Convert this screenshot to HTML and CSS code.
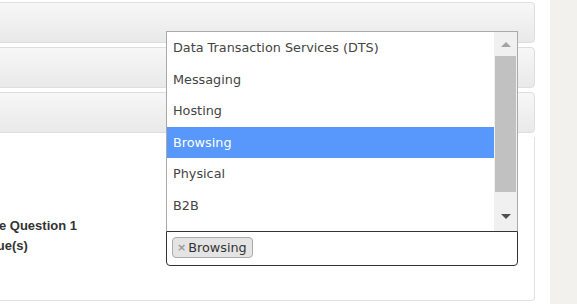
FILE: index.html
```html
<!DOCTYPE html>
<html lang="en">
  <head>
    <meta charset="UTF-8" />
    <title>Question</title>
    <link rel="stylesheet" href="styles.css">
  </head>
  <body>
    <div id="page">
      <div id="main">
        <div class="bar"></div>
        <div class="bar"></div>
        <div class="bar"></div>
        <div class="panel">
          <div class="label">Rate Question 1<br>Value(s)</div>
          <div class="field">
            <div class="dropdown">
              <ul class="options">
                <li>Data Transaction Services (DTS)</li>
                <li>Messaging</li>
                <li>Hosting</li>
                <li class="active">Browsing</li>
                <li>Physical</li>
                <li>B2B</li>
                <li>Other</li>
              </ul>
              <div class="scroll">
                <span class="arrow up"></span>
                <span class="thumb"></span>
                <span class="arrow down"></span>
              </div>
            </div>
            <div class="choices">
              <span class="tag"><span class="remove">×</span>Browsing</span>
            </div>
          </div>
        </div>
        <div class="bar"></div>
      </div>
      <div id="gutter"></div>
      <div id="rail"></div>
    </div>
  </body>
</html>
```

FILE: styles.css
```css
* {
  margin: 0;
  padding: 0;
  box-sizing: border-box;
}
body {
  font-family: "DejaVu Sans", Verdana, sans-serif;
  color: #333;
  background: #fff;
}
#page {
  display: flex;
  height: 304px;
  overflow: hidden;
}
#main {
  width: 565px;
  margin-left: -30px;
  padding-top: 2px;
  display: flex;
  flex-direction: column;
  gap: 4px;
  flex-shrink: 0;
}
#gutter {
  width: 15px;
  flex-shrink: 0;
}
#rail {
  width: 27px;
  background: #f2f1ed;
  flex-shrink: 0;
}
.bar {
  height: 41px;
  flex-shrink: 0;
  border: 1px solid #dedede;
  border-radius: 0 4px 4px 0;
  background: linear-gradient(#f7f7f7, #e9e9e9);
}
.panel {
  height: 164px;
  flex-shrink: 0;
  border: 1px solid #e2e2e2;
  border-top: none;
  border-radius: 0 0 4px 0;
  display: flex;
  padding: 79px 0 0 7px;
}
.label {
  width: 188px;
  font-family: "Liberation Sans", Arial, sans-serif;
  font-size: 13px;
  font-weight: bold;
  line-height: 20px;
  color: #333;
}
.field {
  position: relative;
  width: 352px;
  margin-top: 15px;
  height: 35px;
}
.dropdown {
  position: absolute;
  left: 0;
  bottom: 100%;
  width: 100%;
  height: 200px;
  background: #fff;
  border: 1px solid #aaa;
  border-bottom: none;
  display: flex;
}
.options {
  list-style: none;
  flex: 1;
  overflow: hidden;
}
.options li {
  padding: 8px 6px;
  line-height: 15.5px;
  font-size: 12.8px;
  color: #444;
  white-space: nowrap;
}
.options li.active {
  background: #5897fb;
  color: #fff;
}
.scroll {
  width: 23px;
  background: #f0f0f0;
  display: flex;
  flex-direction: column;
  align-items: center;
}
.arrow {
  width: 0;
  height: 0;
  border-left: 5px solid transparent;
  border-right: 5px solid transparent;
}
.arrow.up {
  border-bottom: 5px solid #a3a3a3;
  margin: 10px 0 9px;
}
.arrow.down {
  border-top: 5px solid #505050;
  margin-top: 22px;
}
.thumb {
  width: 21px;
  height: 136px;
  background: #c1c1c1;
}
.choices {
  height: 35px;
  border: 1px solid #333;
  border-radius: 0 0 4px 4px;
  padding: 5px 0 0 5px;
  display: flex;
  align-items: flex-start;
}
.tag {
  height: 21px;
  padding: 0 5px 0 4px;
  border: 1px solid #aaa;
  border-radius: 4px;
  background: #e4e4e4;
  font-size: 12.8px;
  line-height: 19px;
  color: #333;
  display: flex;
  align-items: center;
}
.remove {
  color: #999;
  font-weight: bold;
  font-size: 11px;
  margin-right: 2px;
}
```
